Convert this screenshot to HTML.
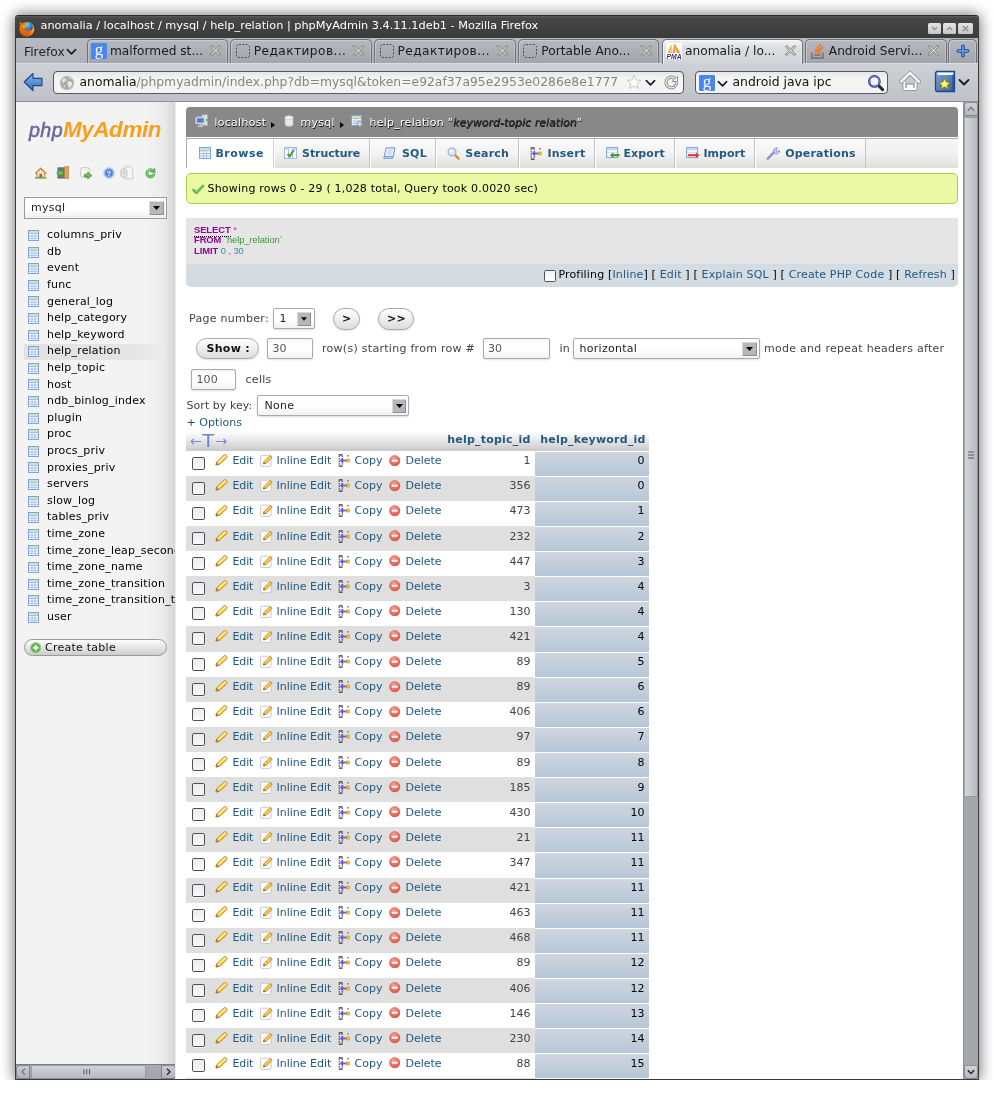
<!DOCTYPE html>
<html><head><meta charset="utf-8"><title>anomalia / localhost / mysql / help_relation | phpMyAdmin 3.4.11.1deb1</title>
<style>
html,body{margin:0;padding:0;}
body{width:994px;height:1099px;position:relative;overflow:hidden;background:#fff;font-family:"DejaVu Sans","Liberation Sans",sans-serif;}
.abs{position:absolute;}
svg{display:block;overflow:visible}
#clip{position:absolute;left:0;top:0;width:994px;height:1080px;overflow:hidden;will-change:transform;}
#win{position:absolute;left:15px;top:15px;width:964px;height:1065px;background:#3a3a3a;border-radius:4px 4px 0 0;
 box-shadow:0 0 14px 1px rgba(0,0,0,.54);}
#title{position:absolute;left:0;top:0;width:964px;height:23px;background:linear-gradient(#2b2b2b 0,#2b2b2b 1px,#5a5a5a 1px,#555 2px,#474747 3px,#3b3b3b 100%);border-radius:4px 4px 0 0;color:#fff;font-size:11.3px;}
#title .t{position:absolute;left:25.5px;top:4px;white-space:nowrap;line-height:14px;}
.wb{position:absolute;top:8px;width:12.5px;height:10.5px;background:linear-gradient(#e4e4e4,#c6c6c6);border-radius:1.5px;}
#tabs{position:absolute;left:1px;top:22.5px;width:962px;height:25px;background:linear-gradient(#b7bac1,#b0b3ba);font-size:12.2px;color:#1a1a1a;}
.tab{position:absolute;top:1.5px;height:23.5px;width:141.5px;border:1px solid #6f7279;border-bottom:none;border-radius:5px 5px 0 0;box-sizing:border-box;
 background:linear-gradient(#b5b8be,#a2a5ab);box-shadow:inset 1px 1px 0 rgba(255,255,255,.28), inset -1px 0 0 rgba(255,255,255,.2);}
.tab.act{background:linear-gradient(#f2f2f3,#dcdee1 35%,#d0d3d7);height:25px;z-index:3;border-color:#6f7279;box-shadow:inset 1px 1px 0 rgba(255,255,255,.55), inset -1px 0 0 rgba(255,255,255,.45);}
.tab .lbl{position:absolute;left:22.5px;top:3px;line-height:16px;white-space:nowrap;}
.tab .fav{position:absolute;left:3.5px;top:2.5px;}
.tab .cx{position:absolute;left:122px;top:5px;}
#nav{position:absolute;left:1px;top:47.5px;width:962px;height:38.5px;background:linear-gradient(#cdd0d5,#bfc2c8);border-top:1px solid #d9dbdf;box-sizing:border-box;}
.tbox{position:absolute;top:7px;height:23.5px;box-sizing:border-box;border:1px solid #55585e;border-radius:4px;background:linear-gradient(#e6e6e6,#f4f4f4 30%,#f4f4f4);font-size:12.4px;}
#content{position:absolute;left:1px;top:86px;width:962px;height:978px;background:#fff;overflow:hidden;font-size:11px;letter-spacing:.25px;color:#444;}
a{color:#235a81;text-decoration:none}
</style></head><body>
<div id="clip">
<div id="win">
<svg width="0" height="0" style="position:absolute">
 <defs>
  <symbol id="i-close" viewBox="0 0 11 11"><path d="M1.6 1.6 L9.4 9.4 M9.4 1.6 L1.6 9.4" stroke="#7f7f79" stroke-width="2.7" stroke-linecap="round"/><path d="M1.8 1.8 L9.2 9.2 M9.2 1.8 L1.8 9.2" stroke="#e2e2da" stroke-width="1.15" stroke-linecap="round"/></symbol>
  <symbol id="i-dash" viewBox="0 0 16 16"><rect x="1.5" y="1.5" width="13" height="13" rx="2.5" fill="none" stroke="#4a4a4a" stroke-width="1" stroke-dasharray="2 1.4"/></symbol>
  <symbol id="i-chev" viewBox="0 0 12 8"><path d="M1.5 1.5 L6 6 L10.5 1.5" fill="none" stroke="#1a1a22" stroke-width="1.8" stroke-linecap="round" stroke-linejoin="round"/></symbol>
 </defs>
</svg>
<div id="title">
 <svg class="abs" style="left:3.2px;top:4.6px" width="17.5" height="17.5" viewBox="0 0 18 18">
  <defs><radialGradient id="ffg" cx=".8" cy=".3" r=".9"><stop offset="0" stop-color="#ffd83a"/><stop offset=".35" stop-color="#f9a01c"/><stop offset=".7" stop-color="#e8640f"/><stop offset="1" stop-color="#b8400e"/></radialGradient>
  <radialGradient id="ffb" cx=".35" cy=".25" r=".8"><stop offset="0" stop-color="#7fd6ff"/><stop offset=".5" stop-color="#2f8fe0"/><stop offset="1" stop-color="#173f9c"/></radialGradient>
  <linearGradient id="bk" x1="0" y1="0" x2="0" y2="1"><stop offset="0" stop-color="#f88a1c"/><stop offset="1" stop-color="#d9560f"/></linearGradient></defs>
  <circle cx="9.2" cy="9.6" r="7.6" fill="url(#ffg)"/>
  <circle cx="10.4" cy="7.4" r="4.9" fill="url(#ffb)"/>
  <path d="M1.6 1.4 L4.6 4 C5.8 3 7.2 2.6 8.6 3 C7.8 3.8 7.4 4.6 7.8 5.6 L9.8 6.2 C9.6 7.4 8.6 8 7.2 7.8 C6.6 9 7.4 10.4 9 10.8 C10.8 11.2 12.4 10.6 13.4 9 C14.2 12.4 12.2 15.8 9 16.6 C5 17 1.6 14 1.5 9.6 C1.4 7.6 1.8 5.8 2.6 4.4Z" fill="url(#bk)"/>
  <path d="M5.2 6.2 C6.2 5.8 7.2 6 7.8 6.6 C7.2 7.6 5.8 7.8 4.8 7.2Z" fill="#fcd34a"/>
 </svg>
 <span class="t">anomalia / localhost / mysql / help_relation | phpMyAdmin 3.4.11.1deb1 - Mozilla Firefox</span>
 <div class="wb" style="left:913px"><svg class="abs" style="left:3px;top:3px" width="7" height="5" viewBox="0 0 7 5"><path d="M1 1 L3.5 3.6 L6 1" fill="none" stroke="#8a8a8a" stroke-width="1.1"/></svg></div>
 <div class="wb" style="left:928px"><svg class="abs" style="left:3px;top:3px" width="7" height="5" viewBox="0 0 7 5"><path d="M1 4 L3.5 1.4 L6 4" fill="none" stroke="#8a8a8a" stroke-width="1.1"/></svg></div>
 <div class="wb" style="left:943px;width:14.5px"><svg class="abs" style="left:4px;top:1.8px" width="7" height="7" viewBox="0 0 7 7"><path d="M.8 .8 L6.2 6.2 M6.2 .8 L.8 6.2" fill="none" stroke="#858585" stroke-width="1.2"/></svg></div>
</div>
<div id="tabs">
 <span class="abs" style="left:8px;top:6px;line-height:16px;font-size:12.3px;color:#222">Firefox</span>
 <svg class="abs" style="left:50px;top:10.5px" width="11" height="8"><use href="#i-chev"/></svg>
 <div class="tab" style="left:70.5px">
  <svg class="fav" width="16" height="16" viewBox="0 0 16 16"><rect width="16" height="16" rx="1.2" fill="#4a86f1"/><text x="8" y="12.3" font-family="Liberation Serif,serif" font-size="17" fill="#fff" text-anchor="middle">g</text></svg>
  <span class="lbl">malformed st...</span><svg class="cx" width="11" height="11"><use href="#i-close"/></svg></div>
 <div class="tab" style="left:214.3px"><svg class="fav" width="16" height="16"><use href="#i-dash"/></svg><span class="lbl" style="letter-spacing:.42px">Редактиров...</span><svg class="cx" width="11" height="11"><use href="#i-close"/></svg></div>
 <div class="tab" style="left:358px"><svg class="fav" width="16" height="16"><use href="#i-dash"/></svg><span class="lbl" style="letter-spacing:.42px">Редактиров...</span><svg class="cx" width="11" height="11"><use href="#i-close"/></svg></div>
 <div class="tab" style="left:501.8px"><svg class="fav" width="16" height="16"><use href="#i-dash"/></svg><span class="lbl">Portable Ano...</span><svg class="cx" width="11" height="11"><use href="#i-close"/></svg></div>
 <div class="tab act" style="left:645.5px">
  <svg class="fav" width="16" height="16" viewBox="0 0 16 16"><rect width="16" height="16" fill="#fff"/><path d="M1.6 10 L5.4 .8 L5.8 10Z" fill="#f9a825"/><path d="M6.6 10 L8.4 .6 L14.4 10Z" fill="#f7931e"/><path d="M8.8 10 L8.9 3.4 L11.6 10Z" fill="#fdd9a0"/><path d="M3.2 10 L5 3 L5 10Z" fill="#fcc56a"/><text x=".6" y="15.7" font-family="Liberation Sans,sans-serif" font-size="6.6" font-weight="bold" font-style="italic" fill="#33337a" textLength="15" lengthAdjust="spacingAndGlyphs">PMA</text></svg>
  <span class="lbl">anomalia / lo...</span><svg class="cx" width="11" height="11"><use href="#i-close"/></svg></div>
 <div class="tab" style="left:789.3px">
  <svg class="fav" width="16" height="16" viewBox="0 0 16 16"><path d="M1.8 9.6 V15 H13 V9.6" fill="none" stroke="#7b7e84" stroke-width="1.9"/><rect x="4" y="11.3" width="6.8" height="1.7" fill="#7b7e84"/><path d="M4.2 9.2 L10.6 10 M4.9 6.4 L11 8.4 M6.6 3.5 L11.8 6.9 M9.2 1 L12.9 5.7" stroke="#ef7d22" stroke-width="1.7"/></svg>
  <span class="lbl">Android Servi...</span><svg class="cx" width="11" height="11"><use href="#i-close"/></svg></div>
 <div class="tab" style="left:932px;width:28.5px"><svg class="abs" style="left:7.5px;top:5px" width="12" height="12" viewBox="0 0 14 14"><path d="M7 1.6 V12.4 M1.6 7 H12.4" stroke="#1d4a94" stroke-width="4.2" stroke-linecap="round"/><path d="M7 1.8 V12.2 M1.8 7 H12.2" stroke="#5d97e0" stroke-width="2.2" stroke-linecap="round"/></svg></div>
</div>
<div id="nav">
 <svg class="abs" style="left:7px;top:8px" width="21" height="20" viewBox="0 0 21 20"><defs><linearGradient id="bka" x1="0" y1="0" x2="0" y2="1"><stop offset="0" stop-color="#8fbdf0"/><stop offset="1" stop-color="#2d65b8"/></linearGradient></defs><path d="M10 1.5 L1.2 10 L10 18.5 V13.6 H19 V6.4 H10Z" fill="url(#bka)" stroke="#1d4a8e" stroke-width="1.2" stroke-linejoin="round"/></svg>
 <div class="tbox" style="left:36.5px;width:631.5px;font-size:12.35px">
  <svg class="abs" style="left:5px;top:3px" width="16" height="16" viewBox="0 0 16 16"><circle cx="8" cy="8" r="6.9" fill="#a9a9a9" stroke="#c9c9c9" stroke-width="1"/><path d="M4 3.4 C6 2.6 8 4 7.2 5.6 C6.4 7 4.6 6.6 4.2 8.4 C3 7.4 2.6 5 4 3.4Z M9 6.6 C10.6 5.6 12.8 6.6 13.4 8.4 C13 10.6 11.6 12.6 9.8 13 C10.2 11.4 8.2 10.6 8.4 8.8 C8.4 7.8 8.6 7 9 6.6Z M9.4 2.2 C10.6 2.4 11.8 3 12.4 4 C11.4 4.4 10 4 9.4 2.2Z M4.6 10 C5.6 10 6.6 11 6.4 12.6 C5.4 12.2 4.8 11.2 4.6 10Z" fill="#e6e6e6"/></svg>
  <span class="abs" style="left:26px;top:2px;line-height:16px;white-space:nowrap;color:#111">anomalia<span style="color:#858585">/phpmyadmin/index.php?db=mysql&amp;token=e92af37a95e2953e0286e8e1777</span></span>
  <svg class="abs" style="left:572.5px;top:2.5px" width="16" height="16" viewBox="0 0 16 16"><path d="M8 1.2 L10 6 L15 6.4 L11.2 9.7 L12.4 14.6 L8 12 L3.6 14.6 L4.8 9.7 L1 6.4 L6 6Z" fill="#fdfdfd" stroke="#c9c9c9" stroke-width="1" stroke-linejoin="round"/></svg>
  <svg class="abs" style="left:591.5px;top:7.5px" width="11" height="8"><use href="#i-chev"/></svg>
  <svg class="abs" style="left:610.5px;top:3px" width="15" height="15" viewBox="0 0 15 15"><path d="M12.6 7.5 A5.3 5.3 0 1 1 10.4 3.2" fill="none" stroke="#8c8c8c" stroke-width="3.2"/><path d="M12.6 7.5 A5.3 5.3 0 1 1 10.4 3.2" fill="none" stroke="#f2f2f2" stroke-width="1.2"/><path d="M8.2 6.4 L13.6 6.6 L13.4 1.2Z" fill="#f2f2f2" stroke="#8c8c8c" stroke-width="1"/></svg>
 </div>
 <div class="tbox" style="left:678.5px;width:193px">
  <svg class="abs" style="left:3.5px;top:3px" width="16" height="16" viewBox="0 0 16 16"><rect width="16" height="16" rx="1.2" fill="#4a86f1"/><text x="8" y="12.3" font-family="Liberation Serif,serif" font-size="17" fill="#fff" text-anchor="middle">g</text></svg>
  <svg class="abs" style="left:21px;top:8px" width="11" height="8"><use href="#i-chev"/></svg>
  <span class="abs" style="left:37px;top:2px;line-height:16px;white-space:nowrap;color:#111">android java ipc</span>
  <svg class="abs" style="left:171px;top:2.5px" width="18" height="18" viewBox="0 0 18 18"><path d="M10.8 10.8 L15.6 15.6" stroke="#2a2a2a" stroke-width="3" stroke-linecap="round"/><circle cx="7.4" cy="7.4" r="5.2" fill="#f4f6fa" stroke="#2e3f9a" stroke-width="2.3"/><circle cx="7.4" cy="7.4" r="5.2" fill="none" stroke="#7f92d8" stroke-width=".8"/></svg>
 </div>
 <svg class="abs" style="left:882px;top:6.5px" width="24" height="22" viewBox="0 0 24 22"><path d="M3 11.6 L12 3 L21 11.6" fill="none" stroke="#8a8a8a" stroke-width="4" stroke-linejoin="miter" stroke-linecap="round"/><path d="M6.4 11.5 V19 H17.6 V11.5 M9.6 19 V15.4 H11 V17.2 H13 V15.4 H14.4 V19" fill="none" stroke="#8a8a8a" stroke-width="3.6" stroke-linejoin="round"/><path d="M6.4 11.5 V19 H17.6 V11.5 M9.6 19 V15.4 H11 V17.2 H13 V15.4 H14.4 V19" fill="none" stroke="#fbfbfb" stroke-width="2" stroke-linejoin="round"/><path d="M3 11.6 L12 3 L21 11.6" fill="none" stroke="#fdfdfd" stroke-width="2.4" stroke-linejoin="miter" stroke-linecap="round"/></svg>
 <svg class="abs" style="left:918px;top:6px" width="22" height="23" viewBox="0 0 22 23"><defs><linearGradient id="bm" x1="0" y1="0" x2="1" y2="1"><stop offset="0" stop-color="#7ea6dc"/><stop offset="1" stop-color="#2f5fa8"/></linearGradient></defs><path d="M3 1.5 H20.5 V21.5 H3.5 C2.2 21.5 1.5 20.6 1.5 19.6 V3.4 C1.5 2.3 2.2 1.5 3 1.5Z" fill="url(#bm)" stroke="#1e468a" stroke-width="1.3"/><path d="M3.6 2.6 H19.4 V5 H4.4 C3.6 5 3.2 4.4 3.2 3.8 C3.2 3.2 3.4 2.8 3.6 2.6Z" fill="#fbfcfe"/><path d="M18.4 4.4 H19.8 V20.6 H18.4Z" fill="#25529a"/><path d="M10.6 8 L12.5 11.9 L16.6 12.4 L13.5 15.2 L14.4 19.2 L10.6 17.1 L6.8 19.2 L7.7 15.2 L4.6 12.4 L8.7 11.9Z" fill="#f6e43a" stroke="#8f7a10" stroke-width=".9" stroke-linejoin="round"/><path d="M10.6 10.6 L11.5 12.9 L13.6 13.2 L12 14.6 L12.4 16.6 L10.6 15.6 L8.8 16.6 L9.2 14.6 L7.6 13.2 L9.7 12.9Z" fill="#fdf8b8"/></svg>
 <svg class="abs" style="left:942px;top:14px" width="12" height="9"><use href="#i-chev"/></svg>
</div>
<div id="content">
<svg width="0" height="0" style="position:absolute"><defs>
 <symbol id="i-tbl" viewBox="0 0 11 11"><rect x=".5" y=".5" width="10" height="10" fill="#fff" stroke="#7fa4dc" stroke-width="1"/><rect x="1" y="1" width="9" height="2" fill="#cfe6b4"/><path d="M1 3.5 H10 M1 6 H10 M1 8.3 H10 M4 3.5 V10 M7 3.5 V10" stroke="#9dbbe8" stroke-width=".9" fill="none"/></symbol>
</defs></svg>
<div id="left" class="abs" style="left:0;top:0;width:159.3px;height:978px;overflow:hidden;background:linear-gradient(90deg,#f3f3f3 0,#f3f3f3 130px,#eaeaea 148px,#d6d6d6 159px);color:#000;white-space:nowrap">
 <div class="abs" style="left:13px;top:14.7px;font-family:'Liberation Sans',sans-serif;font-style:italic;font-weight:bold;line-height:28px;font-size:22.4px;letter-spacing:-0.4px"><span style="color:#6a6a9f;font-weight:normal;font-size:19.6px;letter-spacing:.45px;-webkit-text-stroke:.6px #6a6a9f">php</span><span style="color:#f8a01c">MyAdmin</span></div>
 <svg class="abs" style="left:17.5px;top:65.5px" width="13.5" height="12" viewBox="0 0 15 14"><path d="M7.5 1 L1 7.2 H3 V12 H12 V7.2 H14Z" fill="#f1e2c4" stroke="#b5793a" stroke-width="1"/><path d="M7.5 .8 L.8 7.2 L2 8 L7.5 2.8 L13 8 L14.2 7.2Z" fill="#d98a3a"/><rect x="6" y="8" width="3" height="4" fill="#8a6a4a"/><path d="M.5 12.8 H14.5" stroke="#5aa53a" stroke-width="1.4"/></svg>
 <svg class="abs" style="left:39.5px;top:65px" width="14" height="13" viewBox="0 0 15 14"><rect x="2" y="2" width="8" height="11" fill="#6d7a86" stroke="#4c565f" stroke-width=".8"/><path d="M9 1 L13.5 .4 V13.6 L9 13Z" fill="#e2a35a" stroke="#b5793a" stroke-width=".7"/><path d="M8 5.5 V9.5 H4.6 V11.4 L.6 7.5 L4.6 3.6 V5.5Z" fill="#6fbf4a" stroke="#3f8a2a" stroke-width=".7"/></svg>
 <svg class="abs" style="left:64px;top:66px" width="12.5" height="12.5" viewBox="0 0 14 14"><rect x=".8" y=".8" width="9.6" height="10.4" rx="2" fill="#fafafa" stroke="#bdbdbd" stroke-width="1"/><path d="M2 3 H9.4" stroke="#ddd" stroke-width="1"/><path d="M5 8 H8.6 V5.8 L13.2 9.6 L8.6 13.4 V11.2 H5Z" fill="#6fbf4a" stroke="#3f8a2a" stroke-width=".8"/></svg>
 <svg class="abs" style="left:86.5px;top:66px" width="12" height="12" viewBox="0 0 13 13"><circle cx="6.5" cy="6.5" r="5.6" fill="#7aa4e6" stroke="#b9cdf0" stroke-width="1.4"/><circle cx="6.5" cy="6.5" r="3.8" fill="#4f84d8"/><text x="6.5" y="9.3" font-family="Liberation Sans,sans-serif" font-weight="bold" font-size="7.6" fill="#fff" text-anchor="middle">?</text></svg>
 <svg class="abs" style="left:104px;top:65px" width="13.5" height="13.5" viewBox="0 0 14 14"><path d="M4.5 .8 H10.4 L13.2 3.6 V13.2 H4.5Z" fill="#f6f6f6" stroke="#c4c4c4" stroke-width=".9"/><rect x=".8" y="3" width="6.4" height="8.4" rx="2" fill="#e4e4e4" stroke="#bdbdbd" stroke-width=".9"/><rect x="3" y="5" width="2" height="4" fill="#cfcfcf"/></svg>
 <svg class="abs" style="left:128.5px;top:67px" width="11" height="11" viewBox="0 0 13 13"><path d="M10.6 6.6 A4.2 4.2 0 1 1 8.4 2.6" fill="none" stroke="#4aa044" stroke-width="3.4"/><path d="M10.6 6.6 A4.2 4.2 0 1 1 8.4 2.6" fill="none" stroke="#8fd47c" stroke-width="1.6"/><path d="M6.4 4.4 L12.2 5.6 L11.4 .4Z" fill="#5fb84a" stroke="#3f9a3a" stroke-width=".6"/><path d="M4.6 8.8 L8.2 8.8 L6.4 11.8Z" fill="#5fb84a"/></svg>
 <div class="abs" style="left:8px;top:96px;width:143px;height:21.5px;box-sizing:border-box;border:1px solid #9a9a9a;background:linear-gradient(#fff,#fff 55%,#efefef);font-size:11px;color:#222">
  <span class="abs" style="left:6px;top:2.5px;line-height:14px">mysql</span>
  <div class="abs" style="left:123.5px;top:3px;width:15.5px;height:14px;background:#b6b6bb;box-shadow:inset 1px 1px 0 #d8d8dc, inset -1px -1px 0 #8c8c92"><svg class="abs" style="left:4px;top:5px" width="7" height="4" viewBox="0 0 7 4"><path d="M0 0 H7 L3.5 4Z" fill="#000"/></svg></div>
 </div>
 <svg class="abs" style="left:12px;top:129.0px" width="11" height="11"><use href="#i-tbl"/></svg><a class="abs" style="left:31px;top:127.2px;line-height:14px;color:#000;font-size:11px;letter-spacing:.18px">columns_priv</a>
 <svg class="abs" style="left:12px;top:145.6px" width="11" height="11"><use href="#i-tbl"/></svg><a class="abs" style="left:31px;top:143.8px;line-height:14px;color:#000;font-size:11px;letter-spacing:.18px">db</a>
 <svg class="abs" style="left:12px;top:162.2px" width="11" height="11"><use href="#i-tbl"/></svg><a class="abs" style="left:31px;top:160.4px;line-height:14px;color:#000;font-size:11px;letter-spacing:.18px">event</a>
 <svg class="abs" style="left:12px;top:178.8px" width="11" height="11"><use href="#i-tbl"/></svg><a class="abs" style="left:31px;top:177.0px;line-height:14px;color:#000;font-size:11px;letter-spacing:.18px">func</a>
 <svg class="abs" style="left:12px;top:195.4px" width="11" height="11"><use href="#i-tbl"/></svg><a class="abs" style="left:31px;top:193.6px;line-height:14px;color:#000;font-size:11px;letter-spacing:.18px">general_log</a>
 <svg class="abs" style="left:12px;top:212.0px" width="11" height="11"><use href="#i-tbl"/></svg><a class="abs" style="left:31px;top:210.2px;line-height:14px;color:#000;font-size:11px;letter-spacing:.18px">help_category</a>
 <svg class="abs" style="left:12px;top:228.6px" width="11" height="11"><use href="#i-tbl"/></svg><a class="abs" style="left:31px;top:226.8px;line-height:14px;color:#000;font-size:11px;letter-spacing:.18px">help_keyword</a>
 <div class="abs" style="left:8px;top:242.6px;width:142px;height:16.6px;background:linear-gradient(90deg,#e2e2e2,#e4e4e4 70%,#ececec)"></div>
 <svg class="abs" style="left:12px;top:245.2px" width="11" height="11"><use href="#i-tbl"/></svg><a class="abs" style="left:31px;top:243.4px;line-height:14px;color:#000;font-size:11px;letter-spacing:.18px">help_relation</a>
 <svg class="abs" style="left:12px;top:261.8px" width="11" height="11"><use href="#i-tbl"/></svg><a class="abs" style="left:31px;top:260.0px;line-height:14px;color:#000;font-size:11px;letter-spacing:.18px">help_topic</a>
 <svg class="abs" style="left:12px;top:278.4px" width="11" height="11"><use href="#i-tbl"/></svg><a class="abs" style="left:31px;top:276.6px;line-height:14px;color:#000;font-size:11px;letter-spacing:.18px">host</a>
 <svg class="abs" style="left:12px;top:295.0px" width="11" height="11"><use href="#i-tbl"/></svg><a class="abs" style="left:31px;top:293.2px;line-height:14px;color:#000;font-size:11px;letter-spacing:.18px">ndb_binlog_index</a>
 <svg class="abs" style="left:12px;top:311.6px" width="11" height="11"><use href="#i-tbl"/></svg><a class="abs" style="left:31px;top:309.8px;line-height:14px;color:#000;font-size:11px;letter-spacing:.18px">plugin</a>
 <svg class="abs" style="left:12px;top:328.2px" width="11" height="11"><use href="#i-tbl"/></svg><a class="abs" style="left:31px;top:326.4px;line-height:14px;color:#000;font-size:11px;letter-spacing:.18px">proc</a>
 <svg class="abs" style="left:12px;top:344.8px" width="11" height="11"><use href="#i-tbl"/></svg><a class="abs" style="left:31px;top:343.0px;line-height:14px;color:#000;font-size:11px;letter-spacing:.18px">procs_priv</a>
 <svg class="abs" style="left:12px;top:361.4px" width="11" height="11"><use href="#i-tbl"/></svg><a class="abs" style="left:31px;top:359.6px;line-height:14px;color:#000;font-size:11px;letter-spacing:.18px">proxies_priv</a>
 <svg class="abs" style="left:12px;top:378.0px" width="11" height="11"><use href="#i-tbl"/></svg><a class="abs" style="left:31px;top:376.2px;line-height:14px;color:#000;font-size:11px;letter-spacing:.18px">servers</a>
 <svg class="abs" style="left:12px;top:394.6px" width="11" height="11"><use href="#i-tbl"/></svg><a class="abs" style="left:31px;top:392.8px;line-height:14px;color:#000;font-size:11px;letter-spacing:.18px">slow_log</a>
 <svg class="abs" style="left:12px;top:411.2px" width="11" height="11"><use href="#i-tbl"/></svg><a class="abs" style="left:31px;top:409.4px;line-height:14px;color:#000;font-size:11px;letter-spacing:.18px">tables_priv</a>
 <svg class="abs" style="left:12px;top:427.8px" width="11" height="11"><use href="#i-tbl"/></svg><a class="abs" style="left:31px;top:426.0px;line-height:14px;color:#000;font-size:11px;letter-spacing:.18px">time_zone</a>
 <svg class="abs" style="left:12px;top:444.4px" width="11" height="11"><use href="#i-tbl"/></svg><a class="abs" style="left:31px;top:442.6px;line-height:14px;color:#000;font-size:11px;letter-spacing:.18px">time_zone_leap_second</a>
 <svg class="abs" style="left:12px;top:461.0px" width="11" height="11"><use href="#i-tbl"/></svg><a class="abs" style="left:31px;top:459.2px;line-height:14px;color:#000;font-size:11px;letter-spacing:.18px">time_zone_name</a>
 <svg class="abs" style="left:12px;top:477.6px" width="11" height="11"><use href="#i-tbl"/></svg><a class="abs" style="left:31px;top:475.8px;line-height:14px;color:#000;font-size:11px;letter-spacing:.18px">time_zone_transition</a>
 <svg class="abs" style="left:12px;top:494.2px" width="11" height="11"><use href="#i-tbl"/></svg><a class="abs" style="left:31px;top:492.4px;line-height:14px;color:#000;font-size:11px;letter-spacing:.18px">time_zone_transition_type</a>
 <svg class="abs" style="left:12px;top:510.8px" width="11" height="11"><use href="#i-tbl"/></svg><a class="abs" style="left:31px;top:509.0px;line-height:14px;color:#000;font-size:11px;letter-spacing:.18px">user</a>
 <div class="abs" style="left:8px;top:537.5px;width:143px;height:17px;box-sizing:border-box;border:1px solid #999;border-radius:9px;background:linear-gradient(#fff,#ccc);font-size:11px;letter-spacing:.25px;color:#111">
  <svg class="abs" style="left:5px;top:2.5px" width="11.5" height="11.5" viewBox="0 0 11 11"><circle cx="5.5" cy="5.5" r="4.9" fill="#58b244" stroke="#9bd48a" stroke-width="1"/><path d="M5.5 2.8 V8.2 M2.8 5.5 H8.2" stroke="#fff" stroke-width="1.7"/></svg>
  <span class="abs" style="left:20px;top:1px;line-height:14px">Create table</span>
 </div>
 <div class="abs" style="left:0;top:962.5px;width:160px;height:15.5px;background:linear-gradient(#a9acb2,#a0a3a9);border-top:1px solid #7b7e84;box-sizing:border-box">
  <div class="abs" style="left:0;top:0;width:14px;height:14.5px;border-radius:4px 0 0 4px;background:linear-gradient(#c9ccd1,#aeb1b7);box-shadow:inset 0 0 0 1px rgba(80,82,88,.55)"><svg class="abs" style="left:4.5px;top:3.5px" width="5" height="7.5" viewBox="0 0 6 9"><path d="M4.8 .8 L1.2 4.5 L4.8 8.2" fill="none" stroke="#6a6d73" stroke-width="1.3"/></svg></div>
  <div class="abs" style="left:15px;top:0;width:115px;height:14.5px;background:linear-gradient(#d2d5d9,#b4b7bd);box-shadow:inset 0 0 0 1px rgba(110,113,120,.5)"><svg class="abs" style="left:52px;top:4.5px" width="8" height="5.5" viewBox="0 0 9 6"><path d="M1 0 V6 M4.2 0 V6 M7.4 0 V6" stroke="#3c3e44" stroke-width=".9"/></svg></div>
  <div class="abs" style="left:144.5px;top:0;width:15px;height:14.5px;border-radius:0 4px 4px 0;background:linear-gradient(#c9ccd1,#aeb1b7);box-shadow:inset 0 0 0 1px rgba(80,82,88,.55)"><svg class="abs" style="left:5.5px;top:3.5px" width="5" height="7.5" viewBox="0 0 6 9"><path d="M1.2 .8 L4.8 4.5 L1.2 8.2" fill="none" stroke="#2a2c30" stroke-width="1.6"/></svg></div>
 </div>
</div>
<div class="abs" style="left:159.3px;top:0;width:1px;height:978px;background:#ededed"></div>

<div id="right" class="abs" style="left:161px;top:0;width:786px;height:978px;background:#fff;white-space:nowrap">
<svg width="0" height="0" style="position:absolute"><defs>
 <symbol id="i-sep" viewBox="0 0 4 6"><path d="M0 0 L4 3 L0 6Z" fill="#000"/></symbol>
</defs></svg>
<style>
#si{position:absolute;left:9px;top:6px;width:772px;height:30px;background:#888;border-radius:4px 4px 0 0;color:#fff;text-shadow:.5px 1px 0 #000;font-size:11px;letter-spacing:.26px;line-height:14px}
#si span,#si svg{position:absolute}
#tm{position:absolute;left:9px;top:36.5px;width:772px;height:30.5px;box-sizing:border-box;border-top:1px solid #aaa;border-left:1px solid #aaa;background:linear-gradient(#f6f6f6,#f1f1f1 50%,#dedede);font-weight:bold;font-size:11px;letter-spacing:.27px;line-height:14px}
#tm .tb{position:absolute;top:0;height:29.5px;box-sizing:border-box;border-left:1px solid #fff;border-right:1px solid #c4c4c4;background:linear-gradient(#fbfbfb,#f3f3f3 50%,#dedede);color:#235a81}
#tm .tb.act{background:#fff;border-right:1px solid #d4d4d4}
#tm .tb span{position:absolute;top:8.5px}
#tm .tb svg{position:absolute;top:8.5px}
</style>
<div id="si">
 <svg style="left:9px;top:7px" width="14" height="14" viewBox="0 0 14 14"><rect x="7" y=".8" width="5.6" height="10.6" fill="#e8e8e8" stroke="#a8a8a8" stroke-width=".8"/><rect x="11" y="5" width="1.2" height="2" fill="#4caf3a"/><rect x=".8" y="3" width="9" height="7" rx="1" fill="#dfe6f1" stroke="#b9c0cc" stroke-width=".9"/><rect x="2" y="4.2" width="6.6" height="4.4" fill="#4a7fd2"/><path d="M3 12.4 H8 M5.4 10.4 V12" stroke="#cfcfcf" stroke-width="1.2"/></svg>
 <span style="left:28.5px;top:8.6px">localhost</span>
 <svg style="left:84.5px;top:15px" width="4" height="6"><use href="#i-sep"/></svg>
 <svg style="left:98px;top:8px" width="10" height="12" viewBox="0 0 10 12"><path d="M1 2.5 V9.5 C1 10.6 3 11.3 5 11.3 C7 11.3 9 10.6 9 9.5 V2.5Z" fill="#e9e9e9" stroke="#bdbdbd" stroke-width=".8"/><ellipse cx="5" cy="2.6" rx="4" ry="1.8" fill="#fafafa" stroke="#c6c6c6" stroke-width=".8"/></svg>
 <span style="left:114.5px;top:8.6px">mysql</span>
 <svg style="left:153.5px;top:15px" width="4" height="6"><use href="#i-sep"/></svg>
 <svg style="left:165px;top:8px" width="12" height="12" viewBox="0 0 12 12"><rect x=".5" y=".5" width="10" height="10" fill="#fff" stroke="#7fa4dc" stroke-width="1"/><rect x="1" y="1" width="9" height="2" fill="#cfe6b4"/><path d="M1 3.5 H10 M1 6 H10 M1 8.3 H10 M4 3.5 V10 M7 3.5 V10" stroke="#9dbbe8" stroke-width=".9" fill="none"/><circle cx="8.6" cy="8.8" r="2.6" fill="#c9c9c9" stroke="#8f8f8f" stroke-width=".8"/><circle cx="8.6" cy="8.8" r=".9" fill="#f4f4f4"/></svg>
 <span style="left:183.5px;top:8.6px">help_relation "<i style="color:#2a2a2a;text-shadow:.4px .8px 0 #111;letter-spacing:0">keyword-topic relation</i>"</span>
</div>
<div id="tm">
 <div class="tb act" style="left:0;width:86.5px"><svg style="left:10.5px" width="12" height="12"><use href="#i-tbl"/></svg><span style="left:27.4px;letter-spacing:.5px">Browse</span></div>
 <div class="tb" style="left:86.5px;width:96.5px"><svg style="left:9px" width="13" height="12" viewBox="0 0 13 12"><rect x=".5" y=".5" width="12" height="11" fill="#fff" stroke="#9dbbe8" stroke-width="1"/><path d="M4.4 .5 V11.5 M8.6 .5 V11.5" stroke="#9dbbe8" stroke-width=".9"/><rect x="1" y="1" width="3" height="2" fill="#c9daf2"/><rect x="9" y="1" width="3" height="2" fill="#c9daf2"/><path d="M3.6 7 L5.8 9.4 L9.8 3" fill="none" stroke="#4a9a3a" stroke-width="2"/></svg><span style="left:27.6px;letter-spacing:-.1px">Structure</span></div>
 <div class="tb" style="left:183px;width:66px"><svg style="left:12px" width="13" height="12" viewBox="0 0 13 12"><path d="M3.2 .8 H12 L10.2 9.6 H1.2Z" fill="#eaf1fc" stroke="#6f93d2" stroke-width="1"/><path d="M1 9.6 H10.2 L9.8 11.4 H.8Z" fill="#c3d4f0" stroke="#6f93d2" stroke-width=".8"/><path d="M4.8 3 H10 M4.4 5 H9.6 M4 7 H9.2" stroke="#a9c0e8" stroke-width=".8"/></svg><span style="left:30.9px;letter-spacing:.3px">SQL</span></div>
 <div class="tb" style="left:249px;width:83px"><svg style="left:10px" width="13" height="13" viewBox="0 0 13 13"><path d="M7.6 7.6 L11.6 11.6" stroke="#d0903a" stroke-width="2.4" stroke-linecap="round"/><circle cx="5" cy="5" r="3.9" fill="#d8e9fb" stroke="#9ab2d8" stroke-width="1.3"/><circle cx="4.2" cy="4.2" r="1.4" fill="#fff"/></svg><span style="left:28.3px;letter-spacing:.18px">Search</span></div>
 <div class="tb" style="left:332px;width:76px"><svg style="left:10.4px" width="12" height="13"><use href="#i-cpy"/></svg><span style="left:27.4px;letter-spacing:.24px">Insert</span></div>
 <div class="tb" style="left:408px;width:80px"><svg style="left:10px" width="14" height="12" viewBox="0 0 14 12"><rect x=".6" y=".6" width="11" height="10" fill="#f6f9fe" stroke="#7f9fd6" stroke-width="1"/><rect x="1.1" y="1.1" width="10" height="2.2" fill="#c3d4f0"/><path d="M1 5.6 H11.4" stroke="#c9d8f2" stroke-width=".8"/><path d="M13.6 8.2 H6.4" stroke="#3f9a3a" stroke-width="2.2"/><path d="M7.4 5.2 L3.8 8.2 L7.4 11.2Z" fill="#3f9a3a"/></svg><span style="left:27.4px;letter-spacing:.14px">Export</span></div>
 <div class="tb" style="left:488px;width:80px"><svg style="left:10.2px" width="14" height="12" viewBox="0 0 14 12"><rect x=".6" y=".6" width="11" height="10" fill="#f6f9fe" stroke="#7f9fd6" stroke-width="1"/><rect x="1.1" y="1.1" width="10" height="2.2" fill="#c3d4f0"/><path d="M1 5.6 H11.4" stroke="#c9d8f2" stroke-width=".8"/><path d="M2 8.2 H10.4" stroke="#e23a3a" stroke-width="2.2"/><path d="M9.8 5.2 L13.6 8.2 L9.8 11.2Z" fill="#e23a3a"/></svg><span style="left:27.4px;letter-spacing:.06px">Import</span></div>
 <div class="tb" style="left:568px;width:110.5px"><svg style="left:10.3px" width="14" height="13" viewBox="0 0 14 13"><path d="M1.8 11.6 L8 5.4" stroke="#8797cc" stroke-width="2.6" stroke-linecap="round"/><path d="M7.4 3.2 C8 1.4 10 .6 11.8 1.2 L10 3 L10.6 4.4 L12.2 4.8 L13.4 3 C13.8 4.8 12.8 6.6 11 7 C9 7.2 7.2 5.4 7.4 3.2Z" fill="#c1cae8" stroke="#7f8fc6" stroke-width=".8"/></svg><span style="left:29.2px;letter-spacing:.2px">Operations</span></div>
</div>
<div class="abs" style="left:9px;top:72px;width:772px;height:31px;box-sizing:border-box;border:1px solid #a2d246;border-radius:5px;background:#ebf8a4;color:#000;font-size:11px;letter-spacing:.2px;line-height:14px">
 <svg class="abs" style="left:4.5px;top:10px" width="12.5" height="10.5" viewBox="0 0 14 12"><path d="M1.6 6.8 L5 10 L12.4 2.2" fill="none" stroke="#62ad50" stroke-width="3" stroke-linecap="round" stroke-linejoin="round"/><path d="M1.8 6.4 L5 9.2 L12.2 1.8" fill="none" stroke="#98d488" stroke-width="1" stroke-linecap="round"/></svg>
 <span class="abs" style="left:20.5px;top:7.5px">Showing rows 0 - 29 ( 1,028 total, Query took 0.0020 sec)</span>
</div>
<div class="abs" style="left:9px;top:117px;width:772px;height:46px;background:#e5e5e5;font-family:'Liberation Sans',sans-serif;font-size:9.4px;letter-spacing:-.07px;line-height:10.25px;color:#000">
 <div class="abs" style="left:8px;top:7px"><b style="color:#990099;border-bottom:1px dotted #000;padding-bottom:1px">SELECT</b> <span style="color:#ff00ff">*</span><br><b style="color:#990099">FROM</b> <span style="color:#008000;opacity:.75">`help_relation`</span><br><b style="color:#990099">LIMIT</b> <span style="color:#008080;opacity:.8">0</span> <span style="color:#ff00ff">,</span> <span style="color:#008080;opacity:.8">30</span></div>
</div>
<div class="abs" style="left:9px;top:163px;width:772px;height:22.5px;background:#d3dce3;border-radius:0 0 5px 5px;font-size:11px;letter-spacing:.16px;line-height:14px;color:#000">
 <div class="abs" style="left:357.5px;top:5.5px;width:12px;height:12px;box-sizing:border-box;border:1.3px solid #50535a;border-radius:1.5px;background:linear-gradient(#f2f2f2,#fff)"></div>
 <span class="abs" style="right:3px;top:4px">Profiling [<a>Inline</a>] [ <a>Edit</a> ] [ <a>Explain SQL</a> ] [ <a>Create PHP Code</a> ] [ <a>Refresh</a> ]</span>
</div>
<style>
.ctl{font-size:11px;letter-spacing:.28px;line-height:14px;color:#444}
.ctl span{position:absolute}
.sel{position:absolute;box-sizing:border-box;border:1px solid #aaa;border-radius:2px;background:linear-gradient(#fff,#fff 50%,#f2f2f2);box-shadow:0 1px 2px #ddd;color:#222}
.sel .dd{position:absolute;right:2.5px;top:2.5px;width:15px;height:14px;background:#b6b6bb;box-shadow:inset 1px 1px 0 #d8d8dc, inset -1px -1px 0 #8c8c92}
.sel .dd svg{position:absolute;left:4px;top:5px}
.inp{position:absolute;box-sizing:border-box;border:1px solid #aaa;border-radius:2px;background:linear-gradient(#f4f4f4,#fff 25%,#fff 55%,#f2f2f2);box-shadow:0 1px 2px #ddd;color:#555;letter-spacing:.1px}
.btn{position:absolute;box-sizing:border-box;border:1px solid #aaa;border-radius:11px;background:linear-gradient(#fff,#dcdcdc);box-shadow:0 1px 2px #ddd;color:#111;font-weight:bold;text-align:center}
</style>
<div class="ctl">
 <span style="left:12px;top:210.7px">Page number:</span>
 <div class="sel" style="left:95.5px;top:206.5px;width:42px;height:21.5px"><span style="left:6px;top:3.5px">1</span><div class="dd" style="width:14px;top:3.5px"><svg width="6" height="4" viewBox="0 0 7 4"><path d="M0 0 H7 L3.5 4Z" fill="#000"/></svg></div></div>
 <div class="btn" style="left:155.5px;top:206.5px;width:27.5px;height:22px"><span style="left:8.5px;top:3px">&gt;</span></div>
 <div class="btn" style="left:200.5px;top:206.5px;width:36.5px;height:22px"><span style="left:8.5px;top:3px">&gt;&gt;</span></div>
 <div class="btn" style="left:19px;top:236.5px;width:63px;height:21.5px"><span style="left:9.5px;top:3.5px">Show :</span></div>
 <div class="inp" style="left:90px;top:236.5px;width:46px;height:21.5px"><span style="left:4.5px;top:3.5px">30</span></div>
 <span style="left:145px;top:240.7px">row(s) starting from row #</span>
 <div class="inp" style="left:305.5px;top:236.5px;width:67.5px;height:21.5px"><span style="left:4.5px;top:3.5px">30</span></div>
 <span style="left:382.5px;top:240.7px">in</span>
 <div class="sel" style="left:396px;top:236.5px;width:187px;height:21.5px"><span style="left:5.5px;top:3.5px">horizontal</span><div class="dd" style="top:3.5px"><svg width="7" height="4" viewBox="0 0 7 4"><path d="M0 0 H7 L3.5 4Z" fill="#000"/></svg></div></div>
 <span style="left:587px;top:240.7px">mode and repeat headers after</span>
 <div class="inp" style="left:14px;top:267.5px;width:45px;height:21.5px"><span style="left:4.5px;top:3.5px">100</span></div>
 <span style="left:68.5px;top:271.7px">cells</span>
 <span style="left:9.5px;top:297.5px;letter-spacing:.05px">Sort by key:</span>
 <div class="sel" style="left:80px;top:293.5px;width:152px;height:21px"><span style="left:6.5px;top:3px">None</span><div class="dd" style="width:14px;top:3px"><svg width="7" height="4" viewBox="0 0 7 4"><path d="M0 0 H7 L3.5 4Z" fill="#000"/></svg></div></div>
 <span style="left:9.5px;top:314.5px;letter-spacing:.05px">+ <a>Options</a></span>
</div>
<svg width="0" height="0" style="position:absolute"><defs>
 <linearGradient id="pg" x1="0" y1="0" x2="1" y2="1"><stop offset="0" stop-color="#ffec8a"/><stop offset=".6" stop-color="#f7c83a"/><stop offset="1" stop-color="#eaa024"/></linearGradient>
 <radialGradient id="rg" cx=".4" cy=".3" r=".8"><stop offset="0" stop-color="#f7a090"/><stop offset="1" stop-color="#dd4a3e"/></radialGradient>
 <symbol id="i-pen" viewBox="0 0 13 12"><path d="M1 11 L1.8 7.8 L9 .9 C9.6 .4 10.4 .4 11 1 L11.8 1.8 C12.3 2.4 12.3 3.2 11.8 3.7 L4.4 10.4Z" fill="url(#pg)" stroke="#c27c1e" stroke-width=".9" stroke-linejoin="round"/><path d="M3.4 8.6 L9.6 2.6" stroke="#fbf07a" stroke-width="1.5" stroke-linecap="round"/><path d="M1 11 L1.7 8.4 L3.6 10.2Z" fill="#f0c9a0" stroke="#8a4a1a" stroke-width=".6"/><path d="M9.4 1.4 L11.4 3.4" stroke="#f6dcc8" stroke-width="1.3"/></symbol>
 <symbol id="i-inl" viewBox="0 0 13 13"><rect x=".6" y="1.2" width="10.4" height="11.2" rx="1" fill="#fdfdfd" stroke="#c2c2c2" stroke-width=".9"/><path d="M3.4 10 L4 7.6 L9.6 2 C10 1.6 10.6 1.6 11 2 L11.6 2.6 C12 3 12 3.6 11.6 4 L6 9.4Z" fill="url(#pg)" stroke="#b8741a" stroke-width=".8" stroke-linejoin="round"/><path d="M3.4 10 L3.9 8.1 L5.3 9.4Z" fill="#8a5a2a"/></symbol>
 <symbol id="i-cpy" viewBox="0 0 12 13"><path d="M.8 .8 H4.6 M.8 12.2 H4.6" stroke="#333" stroke-width="1.3" fill="none"/><path d="M1.2 1.4 V11.6 M4.2 1.4 V11.6" stroke="#444" stroke-width="1.1" stroke-dasharray="1.6 1" fill="none"/><path d="M8.6 6.5 H3.4" stroke="#6a5ae0" stroke-width="1.8"/><path d="M5.2 3.4 L1.6 6.5 L5.2 9.6Z" fill="#6a5ae0"/><rect x="8.6" y="5" width="2.8" height="3" fill="#f0c81a" stroke="#b8860a" stroke-width=".5"/><rect x="9.2" y="1" width="1.5" height="1.5" fill="#6a6ae0"/></symbol>
 <symbol id="i-del" viewBox="0 0 12 12"><circle cx="6" cy="6" r="5.5" fill="url(#rg)" stroke="#d85a4a" stroke-width=".6"/><rect x="3" y="5" width="6" height="2" rx=".4" fill="#fff"/></symbol>
</defs></svg>
<style>
#dt{position:absolute;left:9px;top:327.8px;width:462.5px;font-size:11px;letter-spacing:0;line-height:14px}
#dt .hd{position:absolute;left:0;top:0;width:462.5px;height:22px;background:linear-gradient(#fff,#fafafa 20%,#cacaca);color:#235a81;font-weight:bold;letter-spacing:.2px}
#dt .r{position:absolute;left:0;width:349px;height:25.1px}
#dt .r.e{background:#dfdfdf}
#dt .r span,#dt .r a,#dt .r svg,#dt .r i{position:absolute}
#dt .r a{top:3.5px}
#dt .r svg{top:4px}
#dt .r i{left:6px;top:6px;width:13px;height:13px;box-sizing:border-box;border:1.7px solid #4c4f56;border-radius:1.8px;background:linear-gradient(#ececec,#f8f8f8);box-shadow:0 1px 0 rgba(255,255,255,.6)}
#dt .n{top:3.5px;right:4.5px;color:#444}
#dt .k{position:absolute;left:349px;width:113.5px;height:24.1px;background:linear-gradient(#ced6df,#b6c6d7);color:#000}
#dt .k span{position:absolute;right:4px;top:2.5px}
</style>
<div id="dt">
 <div class="hd"><span class="abs" style="left:4px;top:3.3px;color:#7a8ad8;font-weight:normal;font-size:14.4px;letter-spacing:.6px;line-height:18px">&#8592;<span style="display:inline-block;font-size:17.5px;line-height:14px;vertical-align:-1px;color:#7080d2;transform:scaleX(1.12);margin:0 .6px">T</span>&#8594;</span><span class="abs" style="right:118px;top:4.5px">help_topic_id</span><span class="abs" style="right:3px;top:4.5px">help_keyword_id</span></div>
 <div class="r" style="top:21.90px"><i></i><svg style="left:29.4px;top:3.6px" width="13" height="12"><use href="#i-pen"/></svg><a style="left:46.5px;letter-spacing:-.15px">Edit</a><svg style="left:74px;top:3.5px" width="13" height="13"><use href="#i-inl"/></svg><a style="left:90.5px">Inline Edit</a><svg style="left:151.5px;top:3.5px" width="12" height="13"><use href="#i-cpy"/></svg><a style="left:168.5px">Copy</a><svg style="left:202.5px;top:4px" width="11.5" height="11.5"><use href="#i-del"/></svg><a style="left:219.5px">Delete</a><span class="n">1</span></div><div class="k" style="top:22.90px"><span>0</span></div>
 <div class="r e" style="top:47.01px"><i></i><svg style="left:29.4px;top:3.6px" width="13" height="12"><use href="#i-pen"/></svg><a style="left:46.5px;letter-spacing:-.15px">Edit</a><svg style="left:74px;top:3.5px" width="13" height="13"><use href="#i-inl"/></svg><a style="left:90.5px">Inline Edit</a><svg style="left:151.5px;top:3.5px" width="12" height="13"><use href="#i-cpy"/></svg><a style="left:168.5px">Copy</a><svg style="left:202.5px;top:4px" width="11.5" height="11.5"><use href="#i-del"/></svg><a style="left:219.5px">Delete</a><span class="n">356</span></div><div class="k" style="top:48.01px"><span>0</span></div>
 <div class="r" style="top:72.12px"><i></i><svg style="left:29.4px;top:3.6px" width="13" height="12"><use href="#i-pen"/></svg><a style="left:46.5px;letter-spacing:-.15px">Edit</a><svg style="left:74px;top:3.5px" width="13" height="13"><use href="#i-inl"/></svg><a style="left:90.5px">Inline Edit</a><svg style="left:151.5px;top:3.5px" width="12" height="13"><use href="#i-cpy"/></svg><a style="left:168.5px">Copy</a><svg style="left:202.5px;top:4px" width="11.5" height="11.5"><use href="#i-del"/></svg><a style="left:219.5px">Delete</a><span class="n">473</span></div><div class="k" style="top:73.12px"><span>1</span></div>
 <div class="r e" style="top:97.23px"><i></i><svg style="left:29.4px;top:3.6px" width="13" height="12"><use href="#i-pen"/></svg><a style="left:46.5px;letter-spacing:-.15px">Edit</a><svg style="left:74px;top:3.5px" width="13" height="13"><use href="#i-inl"/></svg><a style="left:90.5px">Inline Edit</a><svg style="left:151.5px;top:3.5px" width="12" height="13"><use href="#i-cpy"/></svg><a style="left:168.5px">Copy</a><svg style="left:202.5px;top:4px" width="11.5" height="11.5"><use href="#i-del"/></svg><a style="left:219.5px">Delete</a><span class="n">232</span></div><div class="k" style="top:98.23px"><span>2</span></div>
 <div class="r" style="top:122.34px"><i></i><svg style="left:29.4px;top:3.6px" width="13" height="12"><use href="#i-pen"/></svg><a style="left:46.5px;letter-spacing:-.15px">Edit</a><svg style="left:74px;top:3.5px" width="13" height="13"><use href="#i-inl"/></svg><a style="left:90.5px">Inline Edit</a><svg style="left:151.5px;top:3.5px" width="12" height="13"><use href="#i-cpy"/></svg><a style="left:168.5px">Copy</a><svg style="left:202.5px;top:4px" width="11.5" height="11.5"><use href="#i-del"/></svg><a style="left:219.5px">Delete</a><span class="n">447</span></div><div class="k" style="top:123.34px"><span>3</span></div>
 <div class="r e" style="top:147.45px"><i></i><svg style="left:29.4px;top:3.6px" width="13" height="12"><use href="#i-pen"/></svg><a style="left:46.5px;letter-spacing:-.15px">Edit</a><svg style="left:74px;top:3.5px" width="13" height="13"><use href="#i-inl"/></svg><a style="left:90.5px">Inline Edit</a><svg style="left:151.5px;top:3.5px" width="12" height="13"><use href="#i-cpy"/></svg><a style="left:168.5px">Copy</a><svg style="left:202.5px;top:4px" width="11.5" height="11.5"><use href="#i-del"/></svg><a style="left:219.5px">Delete</a><span class="n">3</span></div><div class="k" style="top:148.45px"><span>4</span></div>
 <div class="r" style="top:172.56px"><i></i><svg style="left:29.4px;top:3.6px" width="13" height="12"><use href="#i-pen"/></svg><a style="left:46.5px;letter-spacing:-.15px">Edit</a><svg style="left:74px;top:3.5px" width="13" height="13"><use href="#i-inl"/></svg><a style="left:90.5px">Inline Edit</a><svg style="left:151.5px;top:3.5px" width="12" height="13"><use href="#i-cpy"/></svg><a style="left:168.5px">Copy</a><svg style="left:202.5px;top:4px" width="11.5" height="11.5"><use href="#i-del"/></svg><a style="left:219.5px">Delete</a><span class="n">130</span></div><div class="k" style="top:173.56px"><span>4</span></div>
 <div class="r e" style="top:197.67px"><i></i><svg style="left:29.4px;top:3.6px" width="13" height="12"><use href="#i-pen"/></svg><a style="left:46.5px;letter-spacing:-.15px">Edit</a><svg style="left:74px;top:3.5px" width="13" height="13"><use href="#i-inl"/></svg><a style="left:90.5px">Inline Edit</a><svg style="left:151.5px;top:3.5px" width="12" height="13"><use href="#i-cpy"/></svg><a style="left:168.5px">Copy</a><svg style="left:202.5px;top:4px" width="11.5" height="11.5"><use href="#i-del"/></svg><a style="left:219.5px">Delete</a><span class="n">421</span></div><div class="k" style="top:198.67px"><span>4</span></div>
 <div class="r" style="top:222.78px"><i></i><svg style="left:29.4px;top:3.6px" width="13" height="12"><use href="#i-pen"/></svg><a style="left:46.5px;letter-spacing:-.15px">Edit</a><svg style="left:74px;top:3.5px" width="13" height="13"><use href="#i-inl"/></svg><a style="left:90.5px">Inline Edit</a><svg style="left:151.5px;top:3.5px" width="12" height="13"><use href="#i-cpy"/></svg><a style="left:168.5px">Copy</a><svg style="left:202.5px;top:4px" width="11.5" height="11.5"><use href="#i-del"/></svg><a style="left:219.5px">Delete</a><span class="n">89</span></div><div class="k" style="top:223.78px"><span>5</span></div>
 <div class="r e" style="top:247.89px"><i></i><svg style="left:29.4px;top:3.6px" width="13" height="12"><use href="#i-pen"/></svg><a style="left:46.5px;letter-spacing:-.15px">Edit</a><svg style="left:74px;top:3.5px" width="13" height="13"><use href="#i-inl"/></svg><a style="left:90.5px">Inline Edit</a><svg style="left:151.5px;top:3.5px" width="12" height="13"><use href="#i-cpy"/></svg><a style="left:168.5px">Copy</a><svg style="left:202.5px;top:4px" width="11.5" height="11.5"><use href="#i-del"/></svg><a style="left:219.5px">Delete</a><span class="n">89</span></div><div class="k" style="top:248.89px"><span>6</span></div>
 <div class="r" style="top:273.00px"><i></i><svg style="left:29.4px;top:3.6px" width="13" height="12"><use href="#i-pen"/></svg><a style="left:46.5px;letter-spacing:-.15px">Edit</a><svg style="left:74px;top:3.5px" width="13" height="13"><use href="#i-inl"/></svg><a style="left:90.5px">Inline Edit</a><svg style="left:151.5px;top:3.5px" width="12" height="13"><use href="#i-cpy"/></svg><a style="left:168.5px">Copy</a><svg style="left:202.5px;top:4px" width="11.5" height="11.5"><use href="#i-del"/></svg><a style="left:219.5px">Delete</a><span class="n">406</span></div><div class="k" style="top:274.00px"><span>6</span></div>
 <div class="r e" style="top:298.11px"><i></i><svg style="left:29.4px;top:3.6px" width="13" height="12"><use href="#i-pen"/></svg><a style="left:46.5px;letter-spacing:-.15px">Edit</a><svg style="left:74px;top:3.5px" width="13" height="13"><use href="#i-inl"/></svg><a style="left:90.5px">Inline Edit</a><svg style="left:151.5px;top:3.5px" width="12" height="13"><use href="#i-cpy"/></svg><a style="left:168.5px">Copy</a><svg style="left:202.5px;top:4px" width="11.5" height="11.5"><use href="#i-del"/></svg><a style="left:219.5px">Delete</a><span class="n">97</span></div><div class="k" style="top:299.11px"><span>7</span></div>
 <div class="r" style="top:323.22px"><i></i><svg style="left:29.4px;top:3.6px" width="13" height="12"><use href="#i-pen"/></svg><a style="left:46.5px;letter-spacing:-.15px">Edit</a><svg style="left:74px;top:3.5px" width="13" height="13"><use href="#i-inl"/></svg><a style="left:90.5px">Inline Edit</a><svg style="left:151.5px;top:3.5px" width="12" height="13"><use href="#i-cpy"/></svg><a style="left:168.5px">Copy</a><svg style="left:202.5px;top:4px" width="11.5" height="11.5"><use href="#i-del"/></svg><a style="left:219.5px">Delete</a><span class="n">89</span></div><div class="k" style="top:324.22px"><span>8</span></div>
 <div class="r e" style="top:348.33px"><i></i><svg style="left:29.4px;top:3.6px" width="13" height="12"><use href="#i-pen"/></svg><a style="left:46.5px;letter-spacing:-.15px">Edit</a><svg style="left:74px;top:3.5px" width="13" height="13"><use href="#i-inl"/></svg><a style="left:90.5px">Inline Edit</a><svg style="left:151.5px;top:3.5px" width="12" height="13"><use href="#i-cpy"/></svg><a style="left:168.5px">Copy</a><svg style="left:202.5px;top:4px" width="11.5" height="11.5"><use href="#i-del"/></svg><a style="left:219.5px">Delete</a><span class="n">185</span></div><div class="k" style="top:349.33px"><span>9</span></div>
 <div class="r" style="top:373.44px"><i></i><svg style="left:29.4px;top:3.6px" width="13" height="12"><use href="#i-pen"/></svg><a style="left:46.5px;letter-spacing:-.15px">Edit</a><svg style="left:74px;top:3.5px" width="13" height="13"><use href="#i-inl"/></svg><a style="left:90.5px">Inline Edit</a><svg style="left:151.5px;top:3.5px" width="12" height="13"><use href="#i-cpy"/></svg><a style="left:168.5px">Copy</a><svg style="left:202.5px;top:4px" width="11.5" height="11.5"><use href="#i-del"/></svg><a style="left:219.5px">Delete</a><span class="n">430</span></div><div class="k" style="top:374.44px"><span>10</span></div>
 <div class="r e" style="top:398.55px"><i></i><svg style="left:29.4px;top:3.6px" width="13" height="12"><use href="#i-pen"/></svg><a style="left:46.5px;letter-spacing:-.15px">Edit</a><svg style="left:74px;top:3.5px" width="13" height="13"><use href="#i-inl"/></svg><a style="left:90.5px">Inline Edit</a><svg style="left:151.5px;top:3.5px" width="12" height="13"><use href="#i-cpy"/></svg><a style="left:168.5px">Copy</a><svg style="left:202.5px;top:4px" width="11.5" height="11.5"><use href="#i-del"/></svg><a style="left:219.5px">Delete</a><span class="n">21</span></div><div class="k" style="top:399.55px"><span>11</span></div>
 <div class="r" style="top:423.66px"><i></i><svg style="left:29.4px;top:3.6px" width="13" height="12"><use href="#i-pen"/></svg><a style="left:46.5px;letter-spacing:-.15px">Edit</a><svg style="left:74px;top:3.5px" width="13" height="13"><use href="#i-inl"/></svg><a style="left:90.5px">Inline Edit</a><svg style="left:151.5px;top:3.5px" width="12" height="13"><use href="#i-cpy"/></svg><a style="left:168.5px">Copy</a><svg style="left:202.5px;top:4px" width="11.5" height="11.5"><use href="#i-del"/></svg><a style="left:219.5px">Delete</a><span class="n">347</span></div><div class="k" style="top:424.66px"><span>11</span></div>
 <div class="r e" style="top:448.77px"><i></i><svg style="left:29.4px;top:3.6px" width="13" height="12"><use href="#i-pen"/></svg><a style="left:46.5px;letter-spacing:-.15px">Edit</a><svg style="left:74px;top:3.5px" width="13" height="13"><use href="#i-inl"/></svg><a style="left:90.5px">Inline Edit</a><svg style="left:151.5px;top:3.5px" width="12" height="13"><use href="#i-cpy"/></svg><a style="left:168.5px">Copy</a><svg style="left:202.5px;top:4px" width="11.5" height="11.5"><use href="#i-del"/></svg><a style="left:219.5px">Delete</a><span class="n">421</span></div><div class="k" style="top:449.77px"><span>11</span></div>
 <div class="r" style="top:473.88px"><i></i><svg style="left:29.4px;top:3.6px" width="13" height="12"><use href="#i-pen"/></svg><a style="left:46.5px;letter-spacing:-.15px">Edit</a><svg style="left:74px;top:3.5px" width="13" height="13"><use href="#i-inl"/></svg><a style="left:90.5px">Inline Edit</a><svg style="left:151.5px;top:3.5px" width="12" height="13"><use href="#i-cpy"/></svg><a style="left:168.5px">Copy</a><svg style="left:202.5px;top:4px" width="11.5" height="11.5"><use href="#i-del"/></svg><a style="left:219.5px">Delete</a><span class="n">463</span></div><div class="k" style="top:474.88px"><span>11</span></div>
 <div class="r e" style="top:498.99px"><i></i><svg style="left:29.4px;top:3.6px" width="13" height="12"><use href="#i-pen"/></svg><a style="left:46.5px;letter-spacing:-.15px">Edit</a><svg style="left:74px;top:3.5px" width="13" height="13"><use href="#i-inl"/></svg><a style="left:90.5px">Inline Edit</a><svg style="left:151.5px;top:3.5px" width="12" height="13"><use href="#i-cpy"/></svg><a style="left:168.5px">Copy</a><svg style="left:202.5px;top:4px" width="11.5" height="11.5"><use href="#i-del"/></svg><a style="left:219.5px">Delete</a><span class="n">468</span></div><div class="k" style="top:499.99px"><span>11</span></div>
 <div class="r" style="top:524.10px"><i></i><svg style="left:29.4px;top:3.6px" width="13" height="12"><use href="#i-pen"/></svg><a style="left:46.5px;letter-spacing:-.15px">Edit</a><svg style="left:74px;top:3.5px" width="13" height="13"><use href="#i-inl"/></svg><a style="left:90.5px">Inline Edit</a><svg style="left:151.5px;top:3.5px" width="12" height="13"><use href="#i-cpy"/></svg><a style="left:168.5px">Copy</a><svg style="left:202.5px;top:4px" width="11.5" height="11.5"><use href="#i-del"/></svg><a style="left:219.5px">Delete</a><span class="n">89</span></div><div class="k" style="top:525.10px"><span>12</span></div>
 <div class="r e" style="top:549.21px"><i></i><svg style="left:29.4px;top:3.6px" width="13" height="12"><use href="#i-pen"/></svg><a style="left:46.5px;letter-spacing:-.15px">Edit</a><svg style="left:74px;top:3.5px" width="13" height="13"><use href="#i-inl"/></svg><a style="left:90.5px">Inline Edit</a><svg style="left:151.5px;top:3.5px" width="12" height="13"><use href="#i-cpy"/></svg><a style="left:168.5px">Copy</a><svg style="left:202.5px;top:4px" width="11.5" height="11.5"><use href="#i-del"/></svg><a style="left:219.5px">Delete</a><span class="n">406</span></div><div class="k" style="top:550.21px"><span>12</span></div>
 <div class="r" style="top:574.32px"><i></i><svg style="left:29.4px;top:3.6px" width="13" height="12"><use href="#i-pen"/></svg><a style="left:46.5px;letter-spacing:-.15px">Edit</a><svg style="left:74px;top:3.5px" width="13" height="13"><use href="#i-inl"/></svg><a style="left:90.5px">Inline Edit</a><svg style="left:151.5px;top:3.5px" width="12" height="13"><use href="#i-cpy"/></svg><a style="left:168.5px">Copy</a><svg style="left:202.5px;top:4px" width="11.5" height="11.5"><use href="#i-del"/></svg><a style="left:219.5px">Delete</a><span class="n">146</span></div><div class="k" style="top:575.32px"><span>13</span></div>
 <div class="r e" style="top:599.43px"><i></i><svg style="left:29.4px;top:3.6px" width="13" height="12"><use href="#i-pen"/></svg><a style="left:46.5px;letter-spacing:-.15px">Edit</a><svg style="left:74px;top:3.5px" width="13" height="13"><use href="#i-inl"/></svg><a style="left:90.5px">Inline Edit</a><svg style="left:151.5px;top:3.5px" width="12" height="13"><use href="#i-cpy"/></svg><a style="left:168.5px">Copy</a><svg style="left:202.5px;top:4px" width="11.5" height="11.5"><use href="#i-del"/></svg><a style="left:219.5px">Delete</a><span class="n">230</span></div><div class="k" style="top:600.43px"><span>14</span></div>
 <div class="r" style="top:624.54px"><i></i><svg style="left:29.4px;top:3.6px" width="13" height="12"><use href="#i-pen"/></svg><a style="left:46.5px;letter-spacing:-.15px">Edit</a><svg style="left:74px;top:3.5px" width="13" height="13"><use href="#i-inl"/></svg><a style="left:90.5px">Inline Edit</a><svg style="left:151.5px;top:3.5px" width="12" height="13"><use href="#i-cpy"/></svg><a style="left:168.5px">Copy</a><svg style="left:202.5px;top:4px" width="11.5" height="11.5"><use href="#i-del"/></svg><a style="left:219.5px">Delete</a><span class="n">88</span></div><div class="k" style="top:625.54px"><span>15</span></div>
 <div class="r e" style="top:649.65px"><i></i><svg style="left:29.4px;top:3.6px" width="13" height="12"><use href="#i-pen"/></svg><a style="left:46.5px;letter-spacing:-.15px">Edit</a><svg style="left:74px;top:3.5px" width="13" height="13"><use href="#i-inl"/></svg><a style="left:90.5px">Inline Edit</a><svg style="left:151.5px;top:3.5px" width="12" height="13"><use href="#i-cpy"/></svg><a style="left:168.5px">Copy</a><svg style="left:202.5px;top:4px" width="11.5" height="11.5"><use href="#i-del"/></svg><a style="left:219.5px">Delete</a><span class="n">89</span></div><div class="k" style="top:650.65px"><span>16</span></div>
</div>
</div>
<div class="abs" style="left:0;top:0;width:962px;height:1px;background:#8b8e95"></div>
<div class="abs" style="left:947px;top:1px;width:15px;height:977px;background:#a3a6ac;border-left:1px solid #8e9197;box-sizing:border-box">
 <div class="abs" style="left:0;top:0;width:14px;height:14px;border-radius:4px 4px 0 0;background:linear-gradient(#d0d3d8,#b4b7bd);box-shadow:inset 0 0 0 1px rgba(80,82,88,.5)"><svg class="abs" style="left:3px;top:4px" width="8" height="6" viewBox="0 0 8 6"><path d="M.8 4.8 L4 1.4 L7.2 4.8" fill="none" stroke="#6a6d73" stroke-width="1.2"/></svg></div>
 <div class="abs" style="left:0;top:15px;width:14px;height:680px;background:linear-gradient(90deg,#d9dbdf,#c3c6cb 50%,#b6b9bf);box-shadow:inset 0 0 0 1px rgba(110,113,120,.55)"><svg class="abs" style="left:4px;top:333.5px" width="6" height="8" viewBox="0 0 6 8"><path d="M0 1 H6 M0 4 H6 M0 7 H6" stroke="#55575d" stroke-width="1"/></svg></div>
 <div class="abs" style="left:0;top:963px;width:14px;height:14px;border-radius:0 0 4px 4px;background:linear-gradient(#d0d3d8,#b4b7bd);box-shadow:inset 0 0 0 1px rgba(80,82,88,.5)"><svg class="abs" style="left:3px;top:4px" width="8" height="6" viewBox="0 0 8 6"><path d="M.8 1.2 L4 4.6 L7.2 1.2" fill="none" stroke="#1f2126" stroke-width="1.4"/></svg></div>

</div>
</div>
</div>
</body></html>
